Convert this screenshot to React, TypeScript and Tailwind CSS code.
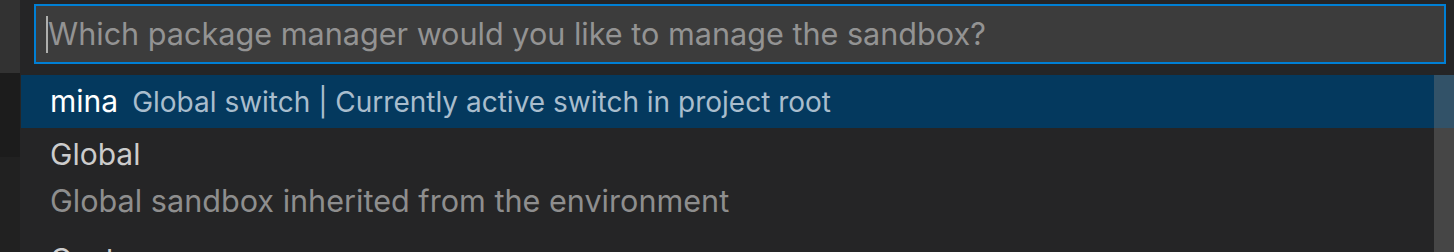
const font = { fontFamily: 'Inter, "Noto Sans", sans-serif' };

function Row({ label, desc, detail, selected }: { label: string; desc?: string; detail?: string; selected?: boolean }) {
  return (
    <div className={`shrink-0 pl-[29px] ${selected ? 'bg-[#04395e]' : ''}`}>
      <div className="h-[53px] flex items-center gap-[14px] whitespace-nowrap">
        <span className={`text-[30px] ${selected ? 'text-white' : 'text-[#cccccc]'}`}>{label}</span>
        {desc && <span className="text-[28px] text-[#a9bdcd]">{desc}</span>}
      </div>
      {detail && (
        <div className="h-[52px] flex items-start whitespace-nowrap text-[30.6px] text-[#8e8e8e] leading-[40px]">{detail}</div>
      )}
    </div>
  );
}

export default function App() {
  return (
    <div className="w-[1454px] h-[252px] overflow-hidden flex bg-[#222222]" style={font}>
      <div className="w-[20px] flex flex-col">
        <div className="h-[73px] bg-[#323232]" />
        <div className="h-[84px] bg-[#1c1c1c]" />
        <div className="flex-1 bg-[#212121]" />
      </div>
      <div className="flex-1 bg-[#252526] pt-[4px] flex flex-col">
        <div className="shrink-0 ml-[14px] mr-[8px] h-[60px] border-2 border-[#007fd4] bg-[#3c3c3c] flex items-center pl-[10px]">
          <span className="w-[2px] h-[37px] bg-[#aeafad]" />
          <span className="text-[30.6px] text-[#939393] whitespace-nowrap">Which package manager would you like to manage the sandbox?</span>
        </div>
        <div className="relative mt-[11px] ml-[1px] flex-1 flex flex-col">
          <Row label="mina" desc="Global switch | Currently active switch in project root" selected />
          <Row label="Global" detail="Global sandbox inherited from the environment" />
          <Row label="Custom" />
          <div className="absolute top-0 right-0 w-[20px] h-full bg-[#797979]/40" />
        </div>
      </div>
    </div>
  );
}
